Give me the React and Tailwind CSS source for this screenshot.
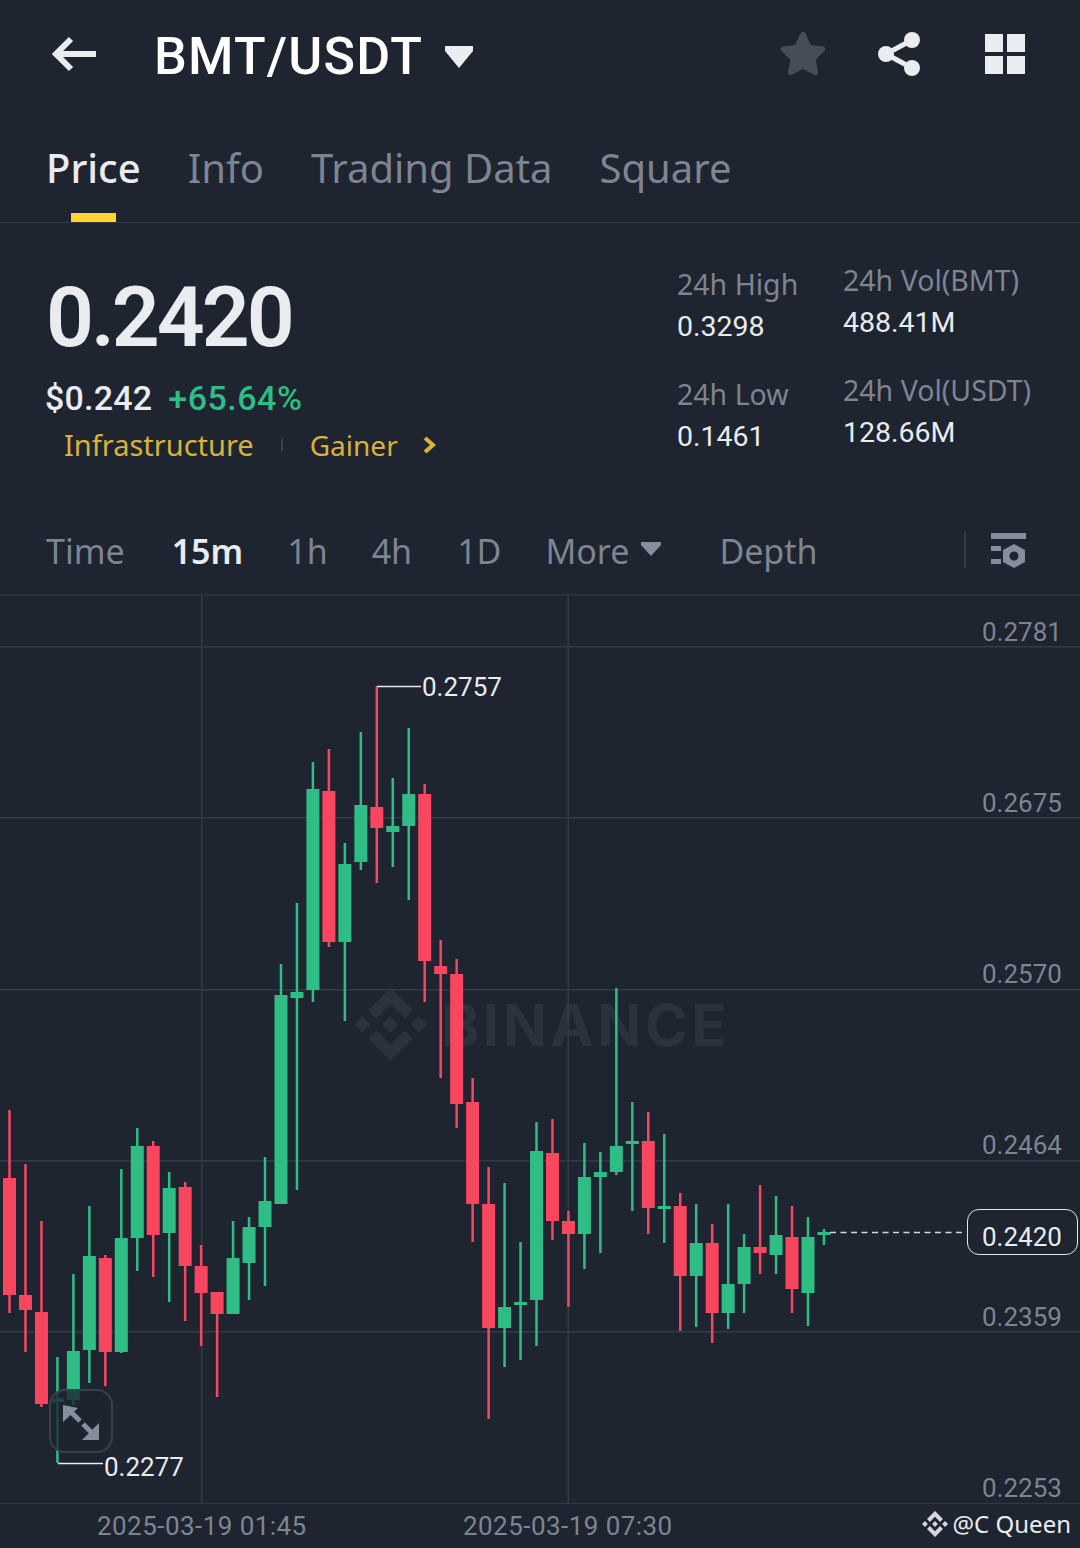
const G = "#2ebd85";
const R = "#f8465f";
const DATA = [
  [-1,"g",1178,1178,1235,1235],[0,"r",1110,1178,1295,1313],[1,"r",1164,1295,1310,1352],[2,"r",1221,1312,1404,1407],
  [3,"g",1357,1398,1402,1463],[4,"g",1274,1351,1400,1405],[5,"g",1206,1256,1350,1383],[6,"r",1255,1258,1352,1386],
  [7,"g",1169,1238,1352,1353],[8,"g",1128,1146,1238,1271],[9,"r",1141,1146,1235,1277],[10,"g",1172,1188,1233,1302],
  [11,"r",1182,1187,1266,1321],[12,"r",1245,1266,1293,1346],[13,"r",1292,1292,1314,1397],[14,"g",1221,1258,1314,1314],
  [15,"g",1217,1227,1263,1300],[16,"g",1157,1201,1227,1286],[17,"g",964,995,1204,1204],[18,"g",903,992,998,1190],
  [19,"g",762,789,990,1002],[20,"r",749,791,942,947],[21,"g",843,864,942,1021],[22,"g",732,805,862,870],
  [23,"r",686,807,828,883],[24,"g",778,826,832,867],[25,"g",728,794,826,900],[26,"r",784,794,961,1002],
  [27,"r",940,966,974,1078],[28,"r",959,974,1104,1128],[29,"r",1078,1102,1204,1242],[30,"r",1167,1204,1328,1419],
  [31,"g",1183,1307,1328,1367],[32,"g",1242,1302,1305,1360],[33,"g",1122,1151,1300,1346],[34,"r",1119,1153,1221,1240],
  [35,"r",1211,1221,1234,1307],[36,"g",1143,1177,1234,1269],[37,"g",1152,1172,1177,1253],[38,"g",988,1146,1172,1175],
  [39,"g",1102,1141,1144,1211],[40,"r",1112,1141,1208,1234],[41,"g",1134,1206,1209,1243],[42,"r",1193,1206,1276,1331],
  [43,"g",1204,1243,1276,1327],[44,"r",1224,1243,1313,1343],[45,"g",1204,1284,1313,1329],[46,"g",1234,1247,1284,1313],
  [47,"r",1185,1247,1253,1274],[48,"g",1196,1235,1255,1274],[49,"r",1206,1237,1289,1313],[50,"g",1217,1237,1293,1326],
  [51,"g",1229,1232,1235,1245],
];
const LOGO = "M16.624 13.9202l2.7175 2.7154-7.353 7.353-7.353-7.352 2.7175-2.7164 4.6355 4.6595 4.6356-4.6595zm4.6366-4.6366L24 12l-2.7154 2.7164L18.5682 12l2.6924-2.7164zm-9.272.001l2.7163 2.6914-2.7164 2.7174v-.001L9.2721 12l2.7164-2.7154zm-9.2722-.001L5.4088 12l-2.6914 2.6924L0 12l2.7164-2.7164zM11.9885.0115l7.353 7.329-2.7174 2.7154-4.6356-4.6356-4.6355 4.6595-2.7174-2.7154 7.353-7.353z";
const AXIS = [["0.2781",631],["0.2675",802],["0.2570",973],["0.2464",1144],["0.2359",1316],["0.2253",1487]];
const GRID = [646,817,989,1160,1331];

function Candles() {
  return (
    <svg className="absolute inset-0" width="1080" height="907" viewBox="0 596 1080 907">
      {GRID.map((y) => <rect key={y} x="0" y={y} width="1080" height="1.5" fill="#343a45" />)}
      <rect x="201" y="596" width="1.5" height="907" fill="#343a45" />
      <rect x="567.5" y="596" width="1.5" height="907" fill="#343a45" />
      <g transform="translate(354 988) scale(3.05)"><path d={LOGO} fill="#2c323d" /></g>
      {DATA.map(([i, c, t, bt, bb, b]) => {
        const x = 9.5 + i * 15.97;
        const f = c === "g" ? G : R;
        return (
          <g key={i} fill={f}>
            <rect x={x - 1.25} y={t} width="2.5" height={b - t} />
            <rect x={x - 6.5} y={bt} width="13" height={bb - bt} />
          </g>
        );
      })}
      <path d="M377 686.5H421M58 1463.5H103" stroke="#eaecef" strokeWidth="1.5" fill="none" />
      <path d="M830 1232.5H966" stroke="#d5d7dc" strokeWidth="1.5" strokeDasharray="6 4.5" fill="none" />
    </svg>
  );
}

function NumAt({ y, x, className, children }) {
  return (
    <div className={`absolute leading-none font-['Roboto',sans-serif] text-[26px] ${className}`} style={{ top: y - 596 - 12, left: x }}>
      {children}
    </div>
  );
}

function Chart() {
  return (
    <div className="relative h-[907px] overflow-hidden">
      <div className="absolute left-[441px] top-[398px] text-[58px] leading-[62px] font-bold tracking-[3.5px] text-[#2c323d] font-['Inter',sans-serif]">BINANCE</div>
      <Candles />
      {AXIS.map(([v, y]) => <NumAt key={v} y={y} x={982} className="text-[#7d8591]">{v}</NumAt>)}
      <NumAt y={686} x={422} className="text-[#eaecef]">0.2757</NumAt>
      <NumAt y={1466} x={104} className="text-[#eaecef]">0.2277</NumAt>
      <div className="absolute left-[967px] top-[613px] w-[111px] h-[46px] rounded-[12px] border-[1.5px] border-[#e4e6ea] bg-[#1e2430] flex items-center pt-[10px] pl-[14px] text-[26px] leading-none text-[#eaecef] font-['Roboto',sans-serif]">0.2420</div>
      <div className="absolute left-[49px] top-[793px] w-16 h-16 rounded-[16px] border-2 border-[#3a404b] bg-[#1e2430]/80">
        <svg className="absolute -left-0.5 -top-0.5" width="64" height="64" viewBox="0 0 64 64" fill="#848e9c">
          <path d="M14 16L29 19L14 33Z" />
          <path d="M20 21L31 32" stroke="#848e9c" strokeWidth="5" />
          <path d="M50 51L33 51L50 34Z" />
          <path d="M45 46L34 35" stroke="#848e9c" strokeWidth="5" />
        </svg>
      </div>
    </div>
  );
}

function Stat({ label, value, className }) {
  return (
    <div className={className}>
      <div className="text-[28.5px] leading-[34px] text-[#7d8591] font-['Noto_Sans',sans-serif]">{label}</div>
      <div className="mt-[9px] text-[28.5px] leading-[34px] text-[#eaecef] font-['Roboto',sans-serif]">{value}</div>
    </div>
  );
}

export default function App() {
  return (
    <div className="w-[1080px] h-[1548px] overflow-hidden bg-[#1e2430] font-['Noto_Sans',sans-serif]">
      <header className="h-[108px] flex items-center relative">
        <svg className="ml-[50px]" width="50" height="40" viewBox="0 0 50 40" fill="none" stroke="#eaecef" strokeWidth="6">
          <path d="M46 20H6M21 5L6 20L21 35" />
        </svg>
        <h1 className="ml-[54px] pt-[6px] text-[52px] leading-none font-medium text-white tracking-[1.2px] font-['Roboto',sans-serif]">BMT/USDT</h1>
        <svg className="ml-[22px] mt-[5px]" width="28" height="22" viewBox="0 0 28 22" fill="#eaecef"><path d="M0 0H28V5L14 22L0 5Z" /></svg>
        <div className="ml-auto flex items-center">
          <svg width="52" height="52" viewBox="0 0 48 48" className="mr-[46px]">
            <path d="M24 6L29.500 18L42 19.500L33 28.500L35.500 41L24 35L12.500 41L15 28.500L6 19.500L18.500 18Z" fill="#474d57" stroke="#474d57" strokeWidth="5" strokeLinejoin="round" />
          </svg>
          <svg width="48" height="48" viewBox="0 0 48 48" className="mr-[62px]">
            <path d="M11 24L37 10M11 24L37 38" stroke="#eaecef" strokeWidth="5" />
            <circle cx="11" cy="24" r="8" fill="#eaecef" /><circle cx="37" cy="10" r="8" fill="#eaecef" /><circle cx="37" cy="38" r="8" fill="#eaecef" />
          </svg>
          <svg width="40" height="40" viewBox="0 0 40 40" fill="#eaecef" className="mr-[55px]">
            <rect width="18" height="18" /><rect x="22" width="18" height="18" /><rect y="22" width="18" height="18" /><rect x="22" y="22" width="18" height="18" />
          </svg>
        </div>
      </header>

      <nav className="h-[115px] border-b-[1.5px] border-[#343a45] pl-[46px] flex items-start gap-[47px] text-[40px] leading-[52px] pt-[34px] text-[#7d8591] relative">
        <div className="text-[#eaecef] font-medium relative">Price</div>
        <div>Info</div>
        <div>Trading Data</div>
        <div>Square</div>
        <div className="absolute left-[71px] bottom-0 w-[45px] h-[9px] bg-[#fcd535]" />
      </nav>

      <section className="h-[298px] relative flex">
        <div className="pl-[45px] pt-[51px] w-[677px]">
          <div className="text-[84px] leading-[88px] font-semibold text-[#eaecef] tracking-[-3px] font-['Roboto',sans-serif] pl-[1px]">0.2420</div>
          <div className="mt-[16px] flex items-center text-[34px] leading-[40px] font-medium font-['Roboto',sans-serif]">
            <span className="text-[#eaecef] tracking-[0.2px]">$0.242</span>
            <span className="ml-[16px] text-[#2ebd85] tracking-[0.5px]">+65.64%</span>
          </div>
          <div className="mt-[7px] ml-[19px] flex items-center text-[29px] leading-[40px] text-[#d9b237]">
            <span>Infrastructure</span>
            <span className="mx-[27px] w-[2px] h-[12px] bg-[#3a404b]" />
            <span className="text-[28px]">Gainer</span>
            <svg className="ml-[25px]" width="14" height="18" viewBox="0 0 14 18" fill="none" stroke="#d9b237" strokeWidth="4"><path d="M2 2L10 9L2 16" /></svg>
          </div>
        </div>
        <div className="pt-[44px] w-[166px]">
          <Stat label="24h High" value="0.3298" />
          <Stat label="24h Low" value="0.1461" className="mt-[33px]" />
        </div>
        <div className="pt-[40px]">
          <Stat label="24h Vol(BMT)" value="488.41M" />
          <Stat label="24h Vol(USDT)" value="128.66M" className="mt-[33px]" />
        </div>
      </section>

      <div className="h-[75px] border-b-[2px] border-[#2c323d] flex items-center pl-[46px] pb-[14px] text-[34px] leading-none text-[#7d8591] relative">
        <span>Time</span>
        <span className="ml-[47px] text-[#eaecef] font-semibold">15m</span>
        <span className="ml-[44px]">1h</span>
        <span className="ml-[44px]">4h</span>
        <span className="ml-[45px]">1D</span>
        <span className="ml-[44px]">More</span>
        <svg className="ml-[12px] -mt-1" width="20" height="14" viewBox="0 0 20 14" fill="#848e9c"><path d="M0 0H20V3L10 14L0 3Z" /></svg>
        <span className="ml-[58px]">Depth</span>
        <span className="absolute left-[964px] top-[10px] w-[2px] h-[37px] bg-[#343a45]" />
        <svg className="absolute left-[990px] top-[12px]" width="38" height="38" viewBox="0 0 38 38" fill="#848e9c">
          <rect x="1" y="0" width="35" height="6" />
          <rect x="1" y="13" width="10" height="5" />
          <rect x="1" y="26" width="10" height="5" />
          <path fillRule="evenodd" d="M24 11L35 17V29L24 35L13 29V17ZM24 18.500a4.500 4.500 0 1 0 0.010 0Z" />
        </svg>
      </div>

      <Chart />

      <footer className="h-[45px] border-t-[1.5px] border-[#343a45] relative text-[#7d8591] text-[26px] leading-[44px] tracking-[0.45px] font-['Roboto',sans-serif]">
        <span className="absolute left-[97px] top-0">2025-03-19 01:45</span>
        <span className="absolute left-[463px] top-0">2025-03-19 07:30</span>
        <div className="absolute right-[9px] -top-[2px] flex items-center text-[#eaecef] font-['Noto_Sans',sans-serif] text-[24px] tracking-normal">
          <svg width="26" height="26" viewBox="0 0 24 24" className="mr-[5px]"><path d={LOGO} fill="#d5d7dc" /></svg>
          @C Queen
        </div>
      </footer>
    </div>
  );
}
